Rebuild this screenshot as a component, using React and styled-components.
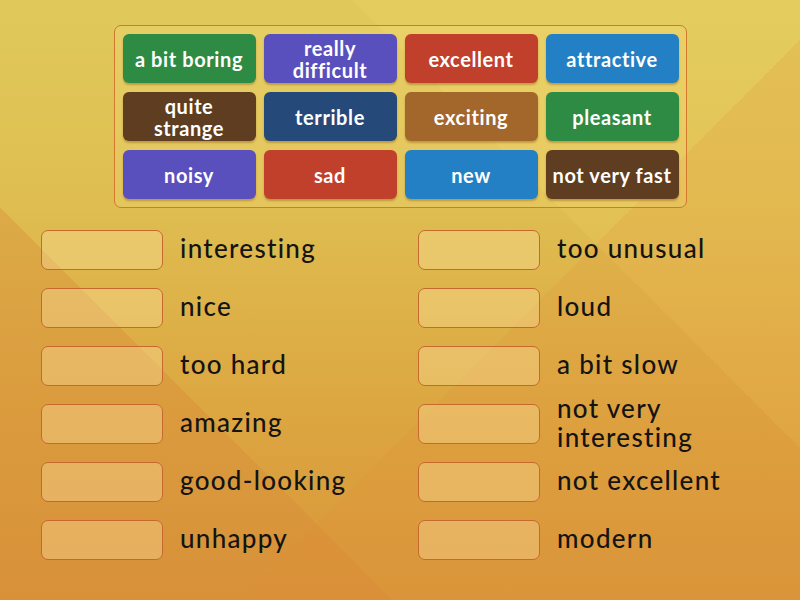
import React from "react";
import styled, { createGlobalStyle } from "styled-components";

const GlobalStyle = createGlobalStyle`
  html, body {
    margin: 0;
    padding: 0;
  }
  body {
    font-family: "Lato", "Noto Sans", sans-serif;
  }
`;

const Page = styled.div`
  width: 800px;
  height: 600px;
  overflow: hidden;
  box-sizing: border-box;
  padding-top: 25px;
  background:
    linear-gradient(135deg, transparent 0 60%, rgba(225, 140, 55, 0.18) 60% 100%),
    linear-gradient(45deg, rgba(215, 135, 55, 0.35) 0 28%, transparent 28% 100%),
    linear-gradient(225deg, rgba(255, 230, 120, 0.12) 0 32%, transparent 32% 100%),
    linear-gradient(180deg, #e0c95b 0%, #dfbd50 35%, #dca540 70%, #d9963a 100%);
`;

const Panel = styled.div`
  width: 573px;
  margin: 0 auto;
  box-sizing: border-box;
  padding: 8px;
  border: 1px solid #d3782c;
  border-radius: 7px;
  background: rgba(255, 240, 150, 0.18);
  display: grid;
  grid-template-columns: repeat(4, 133px);
  grid-auto-rows: 49px;
  column-gap: 8px;
  row-gap: 9px;
`;

const Tile = styled.div`
  background: ${(p) => p.$bg};
  border-radius: 6px;
  box-shadow: 0 2px 2px rgba(120, 70, 10, 0.35);
  color: #fff;
  font-weight: 700;
  font-size: 20px;
  line-height: 22px;
  letter-spacing: 0.6px;
  text-align: center;
  display: flex;
  align-items: center;
  justify-content: center;
  padding: 0 1px;
  white-space: nowrap;
`;

const Matches = styled.div`
  margin-top: 22px;
  padding-left: 41px;
  display: grid;
  grid-template-columns: 377px 377px;
  grid-auto-rows: 40px;
  row-gap: 18px;
`;

const Row = styled.div`
  display: flex;
  align-items: center;
  gap: 17px;
`;

const Slot = styled.div`
  flex: none;
  width: 122px;
  height: 40px;
  box-sizing: border-box;
  border: 1px solid #c5692e;
  border-radius: 7px;
  background: rgba(255, 228, 165, 0.35);
`;

const Label = styled.div`
  color: #141414;
  font-size: 26px;
  font-weight: 500;
  line-height: 29px;
  letter-spacing: 1.3px;
  white-space: nowrap;
  margin-top: -3px;
`;

const COLORS = {
  green: "#2e8b43",
  purple: "#5a50bd",
  red: "#c0402c",
  blue: "#2380c4",
  brown: "#5e3d20",
  navy: "#254a7a",
  tan: "#a3672c",
};

const tiles = [
  ["a bit boring", COLORS.green],
  ["really difficult", COLORS.purple],
  ["excellent", COLORS.red],
  ["attractive", COLORS.blue],
  ["quite strange", COLORS.brown],
  ["terrible", COLORS.navy],
  ["exciting", COLORS.tan],
  ["pleasant", COLORS.green],
  ["noisy", COLORS.purple],
  ["sad", COLORS.red],
  ["new", COLORS.blue],
  ["not very fast", COLORS.brown],
];

const left = ["interesting", "nice", "too hard", "amazing", "good-looking", "unhappy"];
const right = ["too unusual", "loud", "a bit slow", "not very interesting", "not excellent", "modern"];

const breakLabel = (text) => {
  if (text === "really difficult") return <>really<br />difficult</>;
  if (text === "quite strange") return <>quite<br />strange</>;
  if (text === "not very interesting") return <>not very<br />interesting</>;
  return text;
};

export default function App() {
  const rows = [];
  left.forEach((l, i) => {
    rows.push(l, right[i]);
  });

  return (
    <Page>
      <GlobalStyle />
      <Panel>
        {tiles.map(([text, bg]) => (
          <Tile key={text} $bg={bg}>
            <span>{breakLabel(text)}</span>
          </Tile>
        ))}
      </Panel>
      <Matches>
        {rows.map((text) => (
          <Row key={text}>
            <Slot />
            <Label>{breakLabel(text)}</Label>
          </Row>
        ))}
      </Matches>
    </Page>
  );
}
